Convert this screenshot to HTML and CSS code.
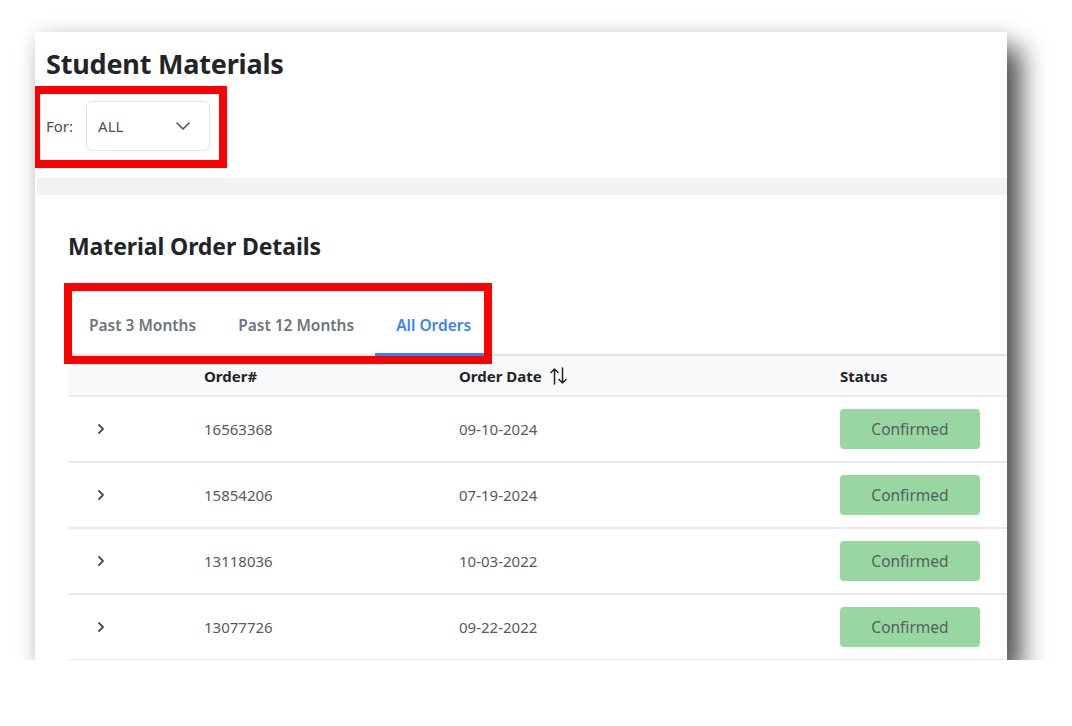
FILE: index.html
```html
<!DOCTYPE html>
<html lang="en">
<head>
  <meta charset="UTF-8">
  <meta name="viewport" content="width=device-width, initial-scale=1.0">
  <title>Student Materials</title>
  <link rel="stylesheet" href="styles.css">
</head>
<body>

  <div class="frame">
    <div class="top">
      <h1>Student Materials</h1>
      <div class="filter">
        <label for="forSelect">For:</label>
        <div class="select" id="forSelect">
          <span>ALL</span>
          <svg class="caret" width="14" height="8" viewBox="0 0 14 8">
            <path d="M1 1 L7 7 L13 1" fill="none" stroke="#495057" stroke-width="1.6" stroke-linecap="round" stroke-linejoin="round"/>
          </svg>
        </div>
      </div>
    </div>

    <div class="band"></div>

    <div class="content">
      <h2>Material Order Details</h2>

      <!-- tabs -->
      <div class="tabs">
        <div class="tab">Past 3 Months</div>
        <div class="tab">Past 12 Months</div>
        <div class="tab active">All Orders</div>
      </div>

      <!-- orders table -->
      <div class="orders">
        <div class="row head">
          <div></div>
          <div>Order#</div>
          <div class="sortable">Order Date
            <svg class="sort" width="17" height="18" viewBox="0 0 17 18">
              <path d="M4.5 17 V2 M1 5.5 L4.5 2 L8 5.5" fill="none" stroke="#212529" stroke-width="1.5" stroke-linecap="round" stroke-linejoin="round"/>
              <path d="M12.5 1 V16 M9 12.5 L12.5 16 L16 12.5" fill="none" stroke="#212529" stroke-width="1.5" stroke-linecap="round" stroke-linejoin="round"/>
            </svg>
          </div>
          <div>Status</div>
        </div>
        <div class="row">
          <div class="expand"><svg width="8" height="10" viewBox="0 0 8 10"><path d="M2 1 L6 5 L2 9" fill="none" stroke="#495057" stroke-width="1.8" stroke-linecap="round" stroke-linejoin="round"/></svg></div>
          <div>16563368</div>
          <div>09-10-2024</div>
          <div><span class="badge">Confirmed</span></div>
        </div>
        <div class="row">
          <div class="expand"><svg width="8" height="10" viewBox="0 0 8 10"><path d="M2 1 L6 5 L2 9" fill="none" stroke="#495057" stroke-width="1.8" stroke-linecap="round" stroke-linejoin="round"/></svg></div>
          <div>15854206</div>
          <div>07-19-2024</div>
          <div><span class="badge">Confirmed</span></div>
        </div>
        <div class="row">
          <div class="expand"><svg width="8" height="10" viewBox="0 0 8 10"><path d="M2 1 L6 5 L2 9" fill="none" stroke="#495057" stroke-width="1.8" stroke-linecap="round" stroke-linejoin="round"/></svg></div>
          <div>13118036</div>
          <div>10-03-2022</div>
          <div><span class="badge">Confirmed</span></div>
        </div>
        <div class="row">
          <div class="expand"><svg width="8" height="10" viewBox="0 0 8 10"><path d="M2 1 L6 5 L2 9" fill="none" stroke="#495057" stroke-width="1.8" stroke-linecap="round" stroke-linejoin="round"/></svg></div>
          <div>13077726</div>
          <div>09-22-2022</div>
          <div><span class="badge">Confirmed</span></div>
        </div>
      </div>
    </div>

    <!-- annotation boxes -->
    <div class="mark mark-filter"></div>
    <div class="mark mark-tabs"></div>
  </div>

</body>
</html>
```

FILE: styles.css
```css
body {
  margin: 0;
  background: #fff;
  font-family: "Noto Sans", "Open Sans", sans-serif;
  color: #212529;
}
.frame {
  position: relative;
  margin: 32px 0 0 35px;
  width: 972px;
  height: 628px;
  overflow: hidden;
  background: #fff;
  box-shadow: 0 0 18px rgba(0, 0, 0, 0.1), 14px 16px 24px rgba(0, 0, 0, 0.68);
}
.top {
  padding: 14px 0 0 11px;
  height: 132px;
}
h1 {
  margin: 0;
  font-size: 27px;
  font-weight: 700;
  line-height: 36px;
  letter-spacing: -0.2px;
}
.filter {
  display: flex;
  align-items: center;
  margin-top: 19px;
}
.filter label {
  font-size: 15px;
  color: #495057;
  margin-right: 13px;
}
.select {
  display: flex;
  align-items: center;
  justify-content: space-between;
  padding: 0 19px 0 11px;
  box-sizing: border-box;
  width: 124px;
  height: 50px;
  border: 1px solid #dee2e6;
  border-radius: 6px;
  font-size: 15px;
  color: #495057;
}
.band {
  height: 17px;
  margin-left: 2px;
  background: #f2f2f2;
}
.content {
  padding: 36px 0 0 33px;
}
h2 {
  margin: 0;
  font-size: 23px;
  font-weight: 700;
  line-height: 30px;
  letter-spacing: -0.1px;
}
.tabs {
  display: flex;
  margin-top: 41px;
  border-bottom: 2px solid #dee2e6;
}
.tab {
  padding: 0 21px;
  height: 52px;
  line-height: 47px;
  font-size: 15.5px;
  font-weight: 600;
  color: #6c757d;
}
.tab.active {
  color: #3b82f6;
  box-shadow: inset 0 -3px 0 #3b82f6;
  margin-bottom: -2px;
  height: 54px;
}
.row {
  display: grid;
  grid-template-columns: 136px 255px 381px 1fr;
  align-items: center;
  height: 64px;
  border-bottom: 2px solid #e9ecef;
  font-size: 15px;
  color: #555b61;
}
.row.head {
  height: 39px;
  background: #f8f9fa;
  color: #212529;
  font-weight: 700;
  font-size: 15px;
}
.expand {
  padding-left: 29px;
  display: flex;
}
.sortable {
  display: flex;
  align-items: center;
  gap: 8px;
}
.badge {
  display: inline-block;
  width: 140px;
  height: 40px;
  line-height: 40px;
  text-align: center;
  background: #98d6a2;
  border-radius: 4px;
  color: #56615a;
  font-size: 15.5px;
}
.mark {
  position: absolute;
  border: 8px solid #ff0000;
  box-sizing: border-box;
}
.mark-filter {
  left: -3px;
  top: 54px;
  width: 195px;
  height: 82px;
}
.mark-tabs {
  left: 29px;
  top: 251px;
  width: 428px;
  height: 81px;
}
```
